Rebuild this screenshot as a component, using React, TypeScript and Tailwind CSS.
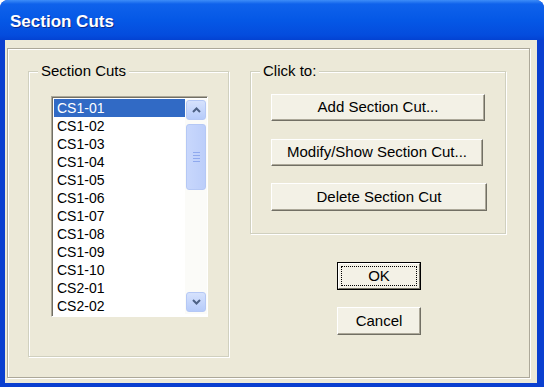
import React from "react"

const cuts = [
    "CS1-01", "CS1-02", "CS1-03", "CS1-04", "CS1-05", "CS1-06",
    "CS1-07", "CS1-08", "CS1-09", "CS1-10", "CS2-01", "CS2-02",
]

function Group({ label, className, children }: { label: string; className: string; children?: React.ReactNode }) {
    return (
        <div className={`relative border border-[#D0D0BF] shadow-[inset_1px_1px_0_#ffffff,1px_1px_0_#ffffff] ${className}`}>
            <span className="absolute -top-[10px] left-[9px] bg-[#ECE9D8] px-[3px] text-[15px] leading-[18px] text-black">
                {label}
            </span>
            {children}
        </div>
    )
}

function Btn({ label, className }: { label: string; className: string }) {
    return (
        <div className={`flex items-center justify-center bg-[#F3F1E6] border border-t-white border-l-white border-r-[#716F64] border-b-[#716F64] shadow-[inset_-1px_-1px_0_#ACA899] text-[15px] text-black ${className}`}>
            {label}
        </div>
    )
}

function ScrollArrow({ up }: { up?: boolean }) {
    return (
        <div className="h-[20px] w-[20px] rounded-[3px] border border-[#B5C8F5] bg-gradient-to-b from-[#D6E2FD] to-[#B6CBFA] flex items-center justify-center">
            <svg width="9" height="6" viewBox="0 0 9 6">
                <path d={up ? "M1 5 L4.5 1.5 L8 5" : "M1 1 L4.5 4.5 L8 1"} fill="none" stroke="#4D6185" strokeWidth="2" />
            </svg>
        </div>
    )
}

export default function App() {
    return (
        <div className="w-[544px] h-[387px] flex flex-col bg-[#0A3FD0] rounded-t-[8px] overflow-hidden font-['Liberation_Sans',Arial,sans-serif]">
            {/* Title bar */}
            <div className="h-[40px] shrink-0 flex items-center pl-[10px] pt-[3px] bg-[linear-gradient(to_bottom,#3D8DF8_0%,#0F62EB_10%,#0558E6_50%,#044CDD_88%,#0342D2_100%)]">
                <span className="text-white font-bold text-[17px] [text-shadow:1px_1px_0_#0A2B8A]">Section Cuts</span>
            </div>

            {/* Client area */}
            <div className="flex-1 ml-[5px] mr-[7px] mb-[4px] bg-[#ECE9D8] pt-[8px] pl-[2px] pr-[7px] pb-[5px] flex">
                <div className="flex-1 border border-[#ACA899] shadow-[inset_1px_1px_0_#ffffff,1px_1px_0_#ffffff] flex pl-[20px] pt-[22px]">
                    <Group label="Section Cuts" className="w-[201px] h-[286px] pl-[22px] pt-[24px]">
                        <div className="w-[157px] h-[221px] bg-white border border-t-[#ACA899] border-l-[#ACA899] border-r-white border-b-white shadow-[inset_1px_1px_0_#716F64] flex pl-[2px] pt-[2px] pb-[2px]">
                            <div className="flex-1 flex flex-col">
                                {cuts.map((c, i) => (
                                    <div
                                        key={c}
                                        className={`h-[18px] leading-[18px] pl-[3px] text-[14px] ${i === 0 ? "bg-[#316AC5] text-white" : "text-black"}`}
                                    >
                                        {c}
                                    </div>
                                ))}
                            </div>
                            <div className="w-[22px] bg-[#FBFBF8] flex flex-col items-center pt-[1px] pb-[2px]">
                                <ScrollArrow up />
                                <div className="mt-[4px] h-[66px] w-[20px] rounded-[3px] border border-[#B5C8F5] bg-gradient-to-r from-[#C8D7FC] to-[#BCCEFA] flex flex-col items-center justify-center gap-[2px]">
                                    <div className="w-[7px] h-px bg-[#8FA9EE]" />
                                    <div className="w-[7px] h-px bg-[#8FA9EE]" />
                                    <div className="w-[7px] h-px bg-[#8FA9EE]" />
                                    <div className="w-[7px] h-px bg-[#8FA9EE]" />
                                </div>
                                <div className="flex-1" />
                                <ScrollArrow />
                            </div>
                        </div>
                    </Group>

                    <div className="ml-[21px] w-[256px] flex flex-col">
                        <Group label="Click to:" className="h-[163px] pl-[20px] pt-[22px] flex flex-col">
                            <Btn label="Add Section Cut..." className="w-[214px] h-[27px]" />
                            <Btn label="Modify/Show Section Cut..." className="mt-[18px] w-[212px] h-[27px]" />
                            <Btn label="Delete Section Cut" className="mt-[17px] w-[216px] h-[28px]" />
                        </Group>
                        <div className="pl-[87px] pt-[28px] flex flex-col gap-[17px]">
                            <div className="w-[84px] h-[28px] border border-black">
                                <div className="w-full h-full bg-[#F3F1E6] border border-t-white border-l-white border-r-[#716F64] border-b-[#716F64] p-[2px]">
                                    <div className="w-full h-full border border-dotted border-black flex items-center justify-center text-[15px] text-black">
                                        OK
                                    </div>
                                </div>
                            </div>
                            <Btn label="Cancel" className="w-[84px] h-[28px]" />
                        </div>
                    </div>
                </div>
            </div>
        </div>
    )
}
